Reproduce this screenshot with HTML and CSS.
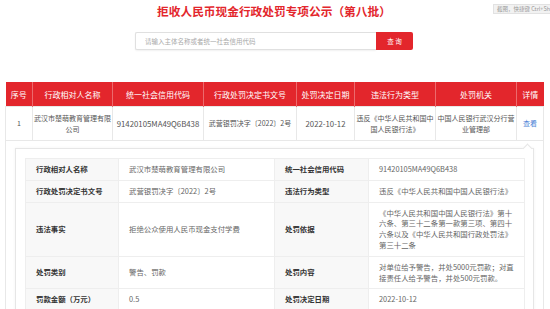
FILE: index.html
```html
<!DOCTYPE html>
<html>
<head>
    <meta charset="utf-8">
    <link rel="stylesheet" href="styles.css">
</head>
<body>
    <div class="tip">截图，快捷键 Ctrl+Sh</div>
    <div class="page">
        <h1 class="title">拒收人民币现金行政处罚专项公示（第八批）</h1>
        <div class="search">
            <input class="search-input" type="text" placeholder="请输入主体名称或者统一社会信用代码">
            <button class="search-btn">查 询</button>
        </div>
        <table class="list">
            <colgroup>
                <col style="width:27px">
                <col style="width:80px">
                <col style="width:91px">
                <col style="width:93px">
                <col style="width:58px">
                <col style="width:81px">
                <col style="width:81px">
                <col style="width:27px">
            </colgroup>
            <thead>
                <tr class="head">
                    <th>序号</th>
                    <th>行政相对人名称</th>
                    <th>统一社会信用代码</th>
                    <th>行政处罚决定书文号</th>
                    <th>处罚决定日期</th>
                    <th>违法行为类型</th>
                    <th>处罚机关</th>
                    <th>详情</th>
                </tr>
            </thead>
            <tbody>
                <tr class="row">
                    <td>1</td>
                    <td>武汉市楚萌教育管理有限公司</td>
                    <td class="code">91420105MA49Q6B438</td>
                    <td>武营银罚决字〔2022〕2号</td>
                    <td class="code">2022-10-12</td>
                    <td>违反《中华人民共和国中国人民银行法》</td>
                    <td>中国人民银行武汉分行营业管理部</td>
                    <td><a class="link" href="#">查看</a></td>
                </tr>
                <tr class="detail-row">
                    <td colspan="8">
                        <div class="detail">
                            <table class="info">
                                <colgroup>
                                    <col style="width:93px">
                                    <col style="width:156px">
                                    <col style="width:94px">
                                    <col style="width:156px">
                                </colgroup>
                                <tr>
                                    <th>行政相对人名称</th>
                                    <td>武汉市楚萌教育管理有限公司</td>
                                    <th>统一社会信用代码</th>
                                    <td>91420105MA49Q6B438</td>
                                </tr>
                                <tr>
                                    <th>行政处罚决定书文号</th>
                                    <td>武营银罚决字〔2022〕2号</td>
                                    <th>违法行为类型</th>
                                    <td>违反《中华人民共和国中国人民银行法》</td>
                                </tr>
                                <tr>
                                    <th>违法事实</th>
                                    <td>拒绝公众使用人民币现金支付学费</td>
                                    <th>处罚依据</th>
                                    <td>《中华人民共和国中国人民银行法》第十六条、第三十二条第一款第三项、第四十六条以及《中华人民共和国行政处罚法》第三十二条</td>
                                </tr>
                                <tr>
                                    <th>处罚类别</th>
                                    <td>警告、罚款</td>
                                    <th>处罚内容</th>
                                    <td>对单位给予警告，并处5000元罚款；对直接责任人给予警告，并处500元罚款。</td>
                                </tr>
                                <tr>
                                    <th>罚款金额（万元）</th>
                                    <td>0.5</td>
                                    <th>处罚决定日期</th>
                                    <td>2022-10-12</td>
                                </tr>
                            </table>
                        </div>
                    </td>
                </tr>
            </tbody>
        </table>
    </div>
</body>
</html>
```

FILE: styles.css
```css
html, body {
    overflow: hidden;
}
body {
    margin: 0;
    background-color: #fff;
    font-family: "Noto Sans CJK SC", "Noto Sans", sans-serif;
    color: #444;
}
.tip {
    position: absolute;
    top: 4px;
    right: 0;
    height: 8px;
    line-height: 8px;
    padding: 0 0 0 3px;
    background-color: #f2f2f2;
    border: 1px solid #e2e2e2;
    border-right: none;
    color: #999;
    font-size: 5.5px;
    white-space: nowrap;
}
.page {
    padding: 0 7px 0 5px;
}
.title {
    margin: 0;
    padding-top: 4px;
    line-height: 14px;
    font-size: 11.7px;
    font-weight: bold;
    text-align: center;
    color: #e3262c;
}
.search {
    display: flex;
    justify-content: center;
    margin-top: 14px;
}
.search-input {
    box-sizing: border-box;
    width: 241px;
    height: 18px;
    padding: 0 9px;
    border: 1px solid #e0e0e0;
    border-right: none;
    border-radius: 2px 0 0 2px;
    box-shadow: 0 1px 2px rgba(0, 0, 0, 0.06);
    font-family: inherit;
    font-size: 6.5px;
    outline: none;
}
.search-input::placeholder {
    color: #aaa;
}
.search-btn {
    width: 37px;
    height: 18px;
    padding: 0;
    border: none;
    border-radius: 0 2px 2px 0;
    background-color: #e3262c;
    color: #fff;
    font-family: inherit;
    font-size: 6.5px;
    cursor: pointer;
}
.list {
    width: 538px;
    margin-top: 32px;
    border-collapse: collapse;
    table-layout: fixed;
}
.head th {
    height: 24px;
    padding: 0;
    background-color: #e3262c;
    border-left: 1px solid #ec6a6d;
    color: #fff;
    font-size: 8px;
    font-weight: normal;
}
.head th:first-child {
    border-left: none;
}
.row td {
    height: 33px;
    padding: 0 1px;
    border: 1px solid #e8e8e8;
    text-align: center;
    font-size: 7px;
    line-height: 11px;
    color: #555;
}
.row .code {
    font-size: 7.8px;
}
.link {
    color: #4a7fd6;
    text-decoration: none;
}
.detail-row td {
    padding: 7px 9px 0 9px;
    border-left: 1px solid #e8e8e8;
    border-right: 1px solid #e8e8e8;
}
.detail {
    position: relative;
    padding: 9px;
    border: 1px solid #e6e6e6;
    box-shadow: 0 0 3px rgba(0, 0, 0, 0.05);
}
.detail::before {
    content: "";
    position: absolute;
    top: -4px;
    right: 2px;
    width: 6px;
    height: 6px;
    background-color: #fff;
    border-top: 1px solid #e6e6e6;
    border-left: 1px solid #e6e6e6;
    transform: rotate(45deg);
}
.info {
    width: 100%;
    border-collapse: collapse;
    table-layout: fixed;
}
.detail-row .info th, .detail-row .info td {
    padding: 5px 8px 5px 10px;
    border: 1px solid #eee;
    text-align: left;
    font-size: 7.4px;
    line-height: 10.8px;
}
.detail-row .info th {
    background-color: #f8f8f8;
    color: #333;
    font-weight: bold;
}
.detail-row .info td {
    color: #666;
}
```
